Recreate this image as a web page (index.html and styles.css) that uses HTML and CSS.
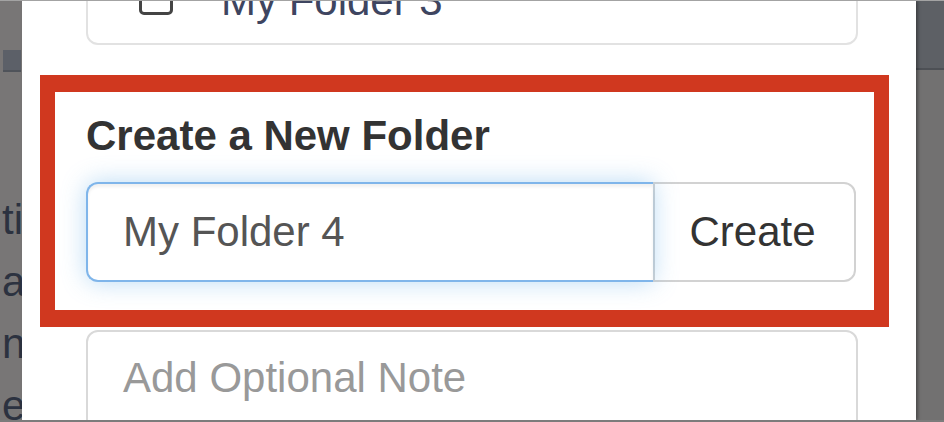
FILE: index.html
```html
<!DOCTYPE html>
<html lang="en">
<head>
<meta charset="utf-8">
<title>Create a New Folder</title>
<link rel="stylesheet" href="styles.css">
</head>
<body>
<div class="frame">
  <div class="side side-left">
    <div class="side-block"></div>
    <div class="side-text">
      <div class="side-line">tion</div>
      <div class="side-line">a</div>
      <div class="side-line">n</div>
      <div class="side-line">e</div>
    </div>
  </div>
  <div class="modal">
    <div class="folder-card">
      <div class="folder-item">
        <span class="checkbox"></span>
        <span class="folder-name">My Folder 3</span>
      </div>
    </div>
    <div class="highlight">
      <div class="label">Create a New Folder</div>
      <div class="input-group">
        <div class="input">My Folder 4</div>
        <div class="btn">Create</div>
      </div>
    </div>
    <div class="note">Add Optional Note</div>
  </div>
  <div class="side side-right">
    <div class="side-block-right"></div>
  </div>
</div>
</body>
</html>
```
FILE: styles.css
```css
html, body {
  margin: 0;
  padding: 0;
}
body {
  width: 944px;
  height: 422px;
  overflow: hidden;
  background: #777;
  font-family: "Liberation Sans", Arial, sans-serif;
}
.frame {
  display: flex;
  height: 422px;
  box-sizing: border-box;
  border-top: 1px solid #a3a3a3;
  border-bottom: 2px solid #7c7c7c;
  overflow: hidden;
}
.side {
  flex: none;
  display: flex;
  flex-direction: column;
  overflow: hidden;
}
.side-left {
  width: 22px;
  background: #787676;
}
.side-block {
  flex: none;
  margin: 49px 0 0 3px;
  width: 18px;
  height: 20px;
  background: #5c6068;
  border-bottom: 2px solid #4f535a;
}
.side-text {
  flex: none;
  margin-top: 117px;
  margin-left: 2px;
  color: #2c3240;
  font-size: 42px;
  line-height: 62px;
  white-space: nowrap;
}
.side-line {
  height: 62px;
}
.modal {
  flex: none;
  width: 894px;
  background: #fff;
  display: flex;
  flex-direction: column;
  box-shadow: 2px 0 3px rgba(0,0,0,0.35);
  position: relative;
  z-index: 1;
}
.modal > * {
  flex: none;
}
.side-right {
  width: 28px;
  background: #727171;
}
.side-block-right {
  flex: none;
  height: 67px;
  background: #5d6065;
  border-bottom: 2px solid #4d5055;
}
.folder-card {
  margin: -61px 0 0 64px;
  width: 772px;
  height: 105px;
  box-sizing: border-box;
  border: 2px solid #e2e2e2;
  border-radius: 12px;
  background: #fff;
  display: flex;
  align-items: flex-end;
}
.folder-item {
  display: flex;
  align-items: center;
  margin: 0 0 15px 51px;
  height: 60px;
}
.checkbox {
  width: 34px;
  height: 34px;
  box-sizing: border-box;
  border: 3px solid #444;
  border-radius: 5px;
  margin-top: 0;
}
.folder-name {
  margin-left: 48px;
  font-size: 42px;
  line-height: 60px;
  color: #3e4560;
  margin-top: 5px;
}
.highlight {
  margin: 30px 0 0 18px;
  width: 849px;
  box-sizing: border-box;
  border: 15px solid #d0381f;
  border-top-width: 17px;
  border-bottom-width: 17px;
  padding: 14px 17px 28px 31px;
}
.label {
  font-weight: bold;
  font-size: 42px;
  line-height: 60px;
  color: #333;
  margin-bottom: 16px;
}
.input-group {
  display: flex;
  height: 100px;
}
.input {
  width: 567px;
  box-sizing: border-box;
  border: 2px solid #7fb5ea;
  border-right: none;
  border-radius: 12px 0 0 12px;
  padding: 0 0 0 35px;
  display: flex;
  align-items: center;
  font-size: 42px;
  color: #555;
  box-shadow: inset 0 3px 3px rgba(0,0,0,0.06), 0 0 24px rgba(102,175,233,0.45);
  position: relative;
  z-index: 1;
  background: #fff;
}
.btn {
  width: 203px;
  box-sizing: border-box;
  border: 2px solid #d2d2d2;
  border-radius: 0 12px 12px 0;
  display: flex;
  align-items: center;
  justify-content: center;
  font-size: 42px;
  color: #333;
  background: #fff;
  padding-right: 4px;
}
.note {
  margin: 3px 0 0 64px;
  width: 772px;
  height: 140px;
  box-sizing: border-box;
  border: 2px solid #d9d9d9;
  border-radius: 12px;
  padding: 16px 0 0 35px;
  font-size: 42px;
  line-height: 60px;
  color: #999;
}
```
